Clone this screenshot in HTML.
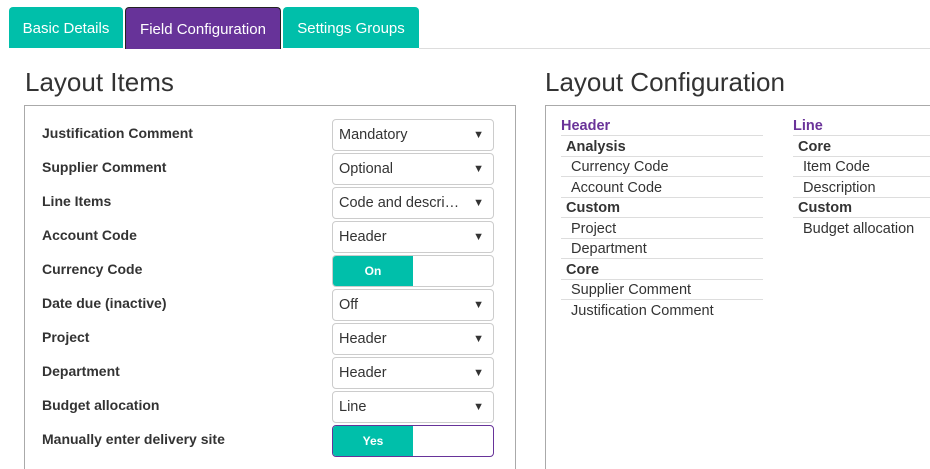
<!DOCTYPE html><html style="overflow:hidden;height:469px"><head><style>
body{margin:0;width:930px;height:469px;overflow:hidden;background:#fff;font-family:"Liberation Sans",sans-serif;color:#333;position:relative}
.tab{position:absolute;top:7px;height:41px;line-height:43px;color:#fff;font-size:15px;text-align:center;border-radius:4px 4px 0 0;background:#00bfaa}
.tabline{position:absolute;left:419px;right:0;top:48px;height:1px;background:#ddd}
h1{position:absolute;margin:0;font-weight:normal;font-size:26px;color:#333}
.box{position:absolute;top:105px;height:364px;border:1px solid #aaa;border-bottom:none;box-sizing:border-box}
.lbl{position:absolute;left:42px;font-weight:bold;font-size:14px}
.sel{position:absolute;left:332px;width:160px;height:30px;border:1px solid #ccc;border-radius:4px;font-size:14.5px;line-height:30px;box-sizing:content-box}
.sel span{position:absolute;left:6px;white-space:nowrap;width:128px;overflow:hidden;text-overflow:ellipsis}
.sel i{position:absolute;right:9px;top:0;font-style:normal;font-size:11px}
.tog .on{position:absolute;left:0;top:0;width:80px;height:100%;background:#00bfaa;color:#fff;text-align:center;font-size:12px;font-weight:bold;border-radius:3px 0 0 3px}
.r{position:absolute;font-size:14.5px;height:20px;line-height:20px;border-bottom:1px solid #ddd;box-sizing:border-box}
.h{font-weight:bold;color:#6a3399}
.g{font-weight:bold}
</style></head><body>
<div class="tab" style="left:9px;width:114px">Basic Details</div>
<div class="tab" style="left:125px;width:154px;background:#673399;border:1px solid #222;border-bottom:none;height:41px">Field Configuration</div>
<div class="tab" style="left:283px;width:136px">Settings Groups</div>
<div class="tabline"></div>
<h1 style="left:25px;top:67px">Layout Items</h1>
<h1 style="left:545px;top:67px">Layout Configuration</h1>
<div class="box" style="left:24px;width:492px"></div>
<div class="box" style="left:545px;width:400px"></div>

<div class="lbl" style="top:125px">Justification Comment</div>
<div class="lbl" style="top:159px">Supplier Comment</div>
<div class="lbl" style="top:193px">Line Items</div>
<div class="lbl" style="top:227px">Account Code</div>
<div class="lbl" style="top:261px">Currency Code</div>
<div class="lbl" style="top:295px">Date due (inactive)</div>
<div class="lbl" style="top:329px">Project</div>
<div class="lbl" style="top:363px">Department</div>
<div class="lbl" style="top:397px">Budget allocation</div>
<div class="lbl" style="top:431px">Manually enter delivery site</div>

<div class="sel" style="top:119px"><span>Mandatory</span><i>▼</i></div>
<div class="sel" style="top:153px"><span>Optional</span><i>▼</i></div>
<div class="sel" style="top:187px"><span>Code and description</span><i>▼</i></div>
<div class="sel" style="top:221px"><span>Header</span><i>▼</i></div>
<div class="sel tog" style="top:255px"><div class="on">On</div></div>
<div class="sel" style="top:289px"><span>Off</span><i>▼</i></div>
<div class="sel" style="top:323px"><span>Header</span><i>▼</i></div>
<div class="sel" style="top:357px"><span>Header</span><i>▼</i></div>
<div class="sel" style="top:391px"><span>Line</span><i>▼</i></div>
<div class="sel tog" style="top:425px;border-color:#673399"><div class="on">Yes</div></div>

<div class="r h" style="left:561px;width:202px;top:116px">Header</div>
<div class="r g" style="left:561px;width:202px;top:137px;padding-left:5px">Analysis</div>
<div class="r" style="left:561px;width:202px;top:157px;padding-left:10px">Currency Code</div>
<div class="r" style="left:561px;width:202px;top:178px;padding-left:10px">Account Code</div>
<div class="r g" style="left:561px;width:202px;top:198px;padding-left:5px">Custom</div>
<div class="r" style="left:561px;width:202px;top:219px;padding-left:10px">Project</div>
<div class="r" style="left:561px;width:202px;top:239px;padding-left:10px">Department</div>
<div class="r g" style="left:561px;width:202px;top:260px;padding-left:5px">Core</div>
<div class="r" style="left:561px;width:202px;top:280px;padding-left:10px">Supplier Comment</div>
<div class="r" style="left:561px;width:202px;top:301px;padding-left:10px;border:none">Justification Comment</div>

<div class="r h" style="left:793px;width:137px;top:116px">Line</div>
<div class="r g" style="left:793px;width:137px;top:137px;padding-left:5px">Core</div>
<div class="r" style="left:793px;width:137px;top:157px;padding-left:10px">Item Code</div>
<div class="r" style="left:793px;width:137px;top:178px;padding-left:10px">Description</div>
<div class="r g" style="left:793px;width:137px;top:198px;padding-left:5px">Custom</div>
<div class="r" style="left:793px;width:137px;top:219px;padding-left:10px;border:none">Budget allocation</div>
</body></html>
